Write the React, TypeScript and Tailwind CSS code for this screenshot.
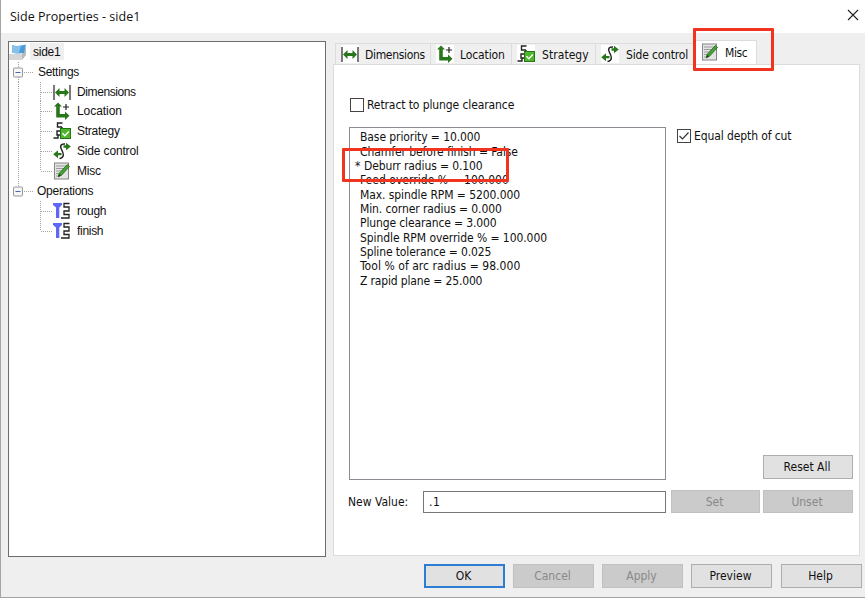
import type { ReactNode } from "react";

type IconName = "dimensions" | "location" | "strategy" | "side" | "misc" | "tool" | "block";

function Icon({ name }: { name: IconName }) {
  return (
    <svg width="18" height="18" viewBox="0 0 18 18" className="block shrink-0">
      {name === "dimensions" && (
        <>
          <path d="M1 2v15M17 2v15" stroke="#222" strokeWidth="1.200" fill="none" />
          <path d="M2 9.500 6.500 5v3h5V5L16 9.500 11.500 14v-3h-5v3z" fill="#28771b" />
        </>
      )}
      {name === "location" && (
        <>
          <path d="M5 0.500 9 4.500H6.800V12H12V9.500l4.500 4.200L12 18v-2.600H3.200V4.500H1z" fill="#28771b" />
          <path d="M13 2v6M10 5h6" stroke="#222" strokeWidth="1.200" />
        </>
      )}
      {name === "strategy" && (
        <>
          <path d="M9.500 1H4.500v4H9M9 5v4M9 9H4v4h4M5 13v3H0.500" stroke="#222" strokeWidth="1.400" fill="none" />
          <rect x="7.500" y="6.500" width="10" height="10" fill="#4eb52d" stroke="#237816" />
          <path d="m9.500 11.300 2.300 2.500 4-4.300" stroke="#fff" strokeWidth="1.400" fill="none" />
        </>
      )}
      {name === "side" && (
        <>
          <path d="M12 2C8 1.500 6.500 4 8.500 7.500S12 15.500 6.500 16.500" stroke="#222" strokeWidth="1.500" fill="none" />
          <path d="M10.500 3.200H13V.8l4.800 3.700L13 8.200V5.800h-2.500zM8.500 11H5V8.300L.2 12.300 5 16.300v-3h3.500z" fill="#28771b" />
        </>
      )}
      {name === "misc" && (
        <>
          <rect x="1.500" y="1" width="14" height="16" fill="#e4e4e4" stroke="#858585" />
          <path d="M3 4h11M3 6.500h8M3 9h6M3 11.500h4M3 14h3" stroke="#9b9b9b" />
          <path d="m6.300 11.200 8-8.600 2.200 1.800-8 8.900-3.300 1.500z" fill="#45a334" stroke="#216619" strokeWidth=".8" />
          <path d="m5 15 1.200-3.300 2 1.700z" fill="#174e13" />
        </>
      )}
      {name === "tool" && (
        <>
          <path d="M0 1h9v2L6.300 5.500V16H3V5.500L0 3z" fill="#6067f4" />
          <path d="M16.500 1.500H11V5h5v4h-5v3.500h5V16H8" stroke="#222" strokeWidth="1.300" fill="none" />
        </>
      )}
      {name === "block" && (
        <>
          <path d="M0 11h13l4-7v8l-4 5H0z" fill="#b7bbc1" />
          <path d="M0 11h13v6H0z" fill="#d5d6d8" />
          <path d="M3 2q5 2 14-.5L15 10q-6 1-12-.2z" fill="#4b9bd9" />
          <path d="M3 2q5 2 9 .5L10 10q-4 .5-7-.2z" fill="#86c1ec" />
        </>
      )}
    </svg>
  );
}

function BranchGuide({ first }: { first?: boolean }) {
  return (
    <svg width="28" height="20" viewBox="0 0 28 20" className="block shrink-0">
      <path d={first ? "M9.500 0v5M9.500 15v5M15 10.500h10" : "M9.500 0v5M15 10.500h10"} stroke="#a3a3a3" strokeDasharray="1 1" />
      <rect x="4.500" y="6" width="9" height="9" rx="1" fill="#f6f6f6" stroke="#989898" />
      <path d="M6.500 10.500h5" stroke="#4c63a6" />
    </svg>
  );
}

function LeafGuide({ trunk, last }: { trunk?: boolean; last?: boolean }) {
  return (
    <svg width="44" height="20" viewBox="0 0 44 20" className="block shrink-0">
      <path
        d={`${trunk ? "M9.500 0v20" : ""}M31.500 0v${last ? 10 : 20}M32 10.500h11`}
        stroke="#a3a3a3"
        strokeDasharray="1 1"
      />
    </svg>
  );
}

const settings: { icon: IconName; label: string; style: string }[] = [
  { icon: "dimensions", label: "Dimensions", style: "tracking-[-0.4px]" },
  { icon: "location", label: "Location", style: "tracking-[-0.05px]" },
  { icon: "strategy", label: "Strategy", style: "tracking-[-0.25px]" },
  { icon: "side", label: "Side control", style: "tracking-[-0.16px]" },
  { icon: "misc", label: "Misc", style: "tracking-[-0.2px]" },
];

const row = "flex h-[19.85px] items-center whitespace-nowrap";

function Tree() {
  return (
    <div className="h-[516px] w-[318px] shrink-0 overflow-hidden border border-[#6c6c6c] bg-white font-['Liberation_Sans',sans-serif] text-[12px] text-[#111]">
      <div className={row}>
        <Icon name="block" />
        <span className="ml-[3px] flex h-[17px] w-[34px] items-center bg-[#efefef] pl-[3px] tracking-[-0.25px]">side1</span>
      </div>
      <div className={row}>
        <BranchGuide first />
        <span className="ml-[1px] tracking-[-0.3px]">Settings</span>
      </div>
      {settings.map((s, i) => (
        <div key={s.label} className={row}>
          <LeafGuide trunk last={i === 4} />
          <Icon name={s.icon} />
          <span className={`ml-[6px] ${s.style}`}>{s.label}</span>
        </div>
      ))}
      <div className={row}>
        <BranchGuide />
        <span className="tracking-[-0.24px]">Operations</span>
      </div>
      {["rough", "finish"].map((label, i) => (
        <div key={label} className={row}>
          <LeafGuide last={i === 1} />
          <Icon name="tool" />
          <span className="ml-[6px] tracking-[-0.3px]">{label}</span>
        </div>
      ))}
    </div>
  );
}

function Tab({ icon, label, size, text }: { icon: IconName; label: string; size: string; text: string }) {
  return (
    <div className={`flex h-[21px] shrink-0 items-center whitespace-nowrap border-t border-r border-[#dcdcdc] pl-[5px] ${size}`}>
      <span className="bg-white"><Icon name={icon} /></span>
      <span className={`mt-[1px] ${text}`}>{label}</span>
    </div>
  );
}

function Check({ label, checked, className }: { label: string; checked?: boolean; className: string }) {
  return (
    <label className={`flex h-[15px] items-center gap-[3px] whitespace-nowrap tracking-[-0.1px] ${className}`}>
      <span className="flex size-[14px] items-center justify-center border border-[#444] bg-white">
        {checked && (
          <svg width="12" height="12" viewBox="0 0 12 12">
            <path d="m1.500 6 3 3 6-6.500" fill="none" stroke="#333" strokeWidth="1.200" />
          </svg>
        )}
      </span>
      <span>{label}</span>
    </label>
  );
}

function Button({ children, kind = "normal", size }: { children: ReactNode; kind?: "normal" | "off" | "primary"; size: string }) {
  const look =
    kind === "off"
      ? "border border-[#c0c0c0] bg-[#cbcbcb] text-[#898989]"
      : kind === "primary"
        ? "border-2 border-[#2d7dd2] bg-[#e1e1e1]"
        : "border border-[#adadad] bg-[#e1e1e1]";
  return <button className={`flex shrink-0 items-center justify-center whitespace-nowrap pr-[2px] ${look} ${size}`}>{children}</button>;
}

const params: [string, string][] = [
  ["Base priority = 10.000", "tracking-[-0.09px]"],
  ["Chamfer before finish = False", "tracking-[-0.07px]"],
  ["Deburr radius = 0.100", "tracking-[-0.11px]"],
  ["Feed override % = 100.000", "tracking-[0.03px]"],
  ["Max. spindle RPM = 5200.000", "tracking-[-0.08px]"],
  ["Min. corner radius = 0.000", "tracking-[-0.1px]"],
  ["Plunge clearance = 3.000", "tracking-[-0.13px]"],
  ["Spindle RPM override % = 100.000", "tracking-[-0.07px]"],
  ["Spline tolerance = 0.025", "tracking-[-0.13px]"],
  ["Tool % of arc radius = 98.000", "tracking-[0.05px]"],
  ["Z rapid plane = 25.000", "tracking-[-0.15px]"],
];

export default function App() {
  return (
    <div className="relative flex h-[598px] w-[865px] flex-col overflow-hidden border-b border-l border-[#a5a5a5] bg-[#efefef] font-['DejaVu_Sans_Condensed','DejaVu_Sans',sans-serif] text-[12px] leading-[14px] text-[#111] [font-stretch:condensed]">
      <header className="flex h-[33px] shrink-0 items-center justify-between bg-white pl-[9px] pr-[6px] font-['Open_Sans',sans-serif] text-[12.5px] [font-stretch:normal]">
        <span className="tracking-[0.02px]">Side Properties - side1</span>
        <svg width="12" height="12" viewBox="0 0 12 12" className="mb-1">
          <path d="m1 1 10 10M11 1 1 11" stroke="#222" strokeWidth="1.100" />
        </svg>
      </header>
      <main className="flex h-[524px] shrink-0 gap-[7px] pl-[7px] pt-[8px]">
        <Tree />
        <section className="flex w-[527px] flex-col">
          <nav className="flex h-[23px] shrink-0 items-end pl-[2px]">
            <Tab icon="dimensions" label="Dimensions" size="w-[96px] border-l" text="ml-[6px] tracking-[-0.33px]" />
            <Tab icon="location" label="Location" size="w-[81px]" text="ml-[6px] tracking-[-0.1px]" />
            <Tab icon="strategy" label="Strategy" size="w-[84px]" text="ml-[7px] tracking-[0.06px]" />
            <Tab icon="side" label="Side control" size="w-[98px]" text="ml-[7px] tracking-[-0.18px]" />
            <div className="mb-[-1px] flex h-[25px] w-[63px] items-center border-r border-t border-[#dcdcdc] bg-white pl-[7px] pb-[2px]">
              <Icon name="misc" />
              <span className="ml-[6px] mt-[1px] tracking-[-0.4px]">Misc</span>
            </div>
          </nav>
          <div className="flex h-[492px] shrink-0 flex-col border border-[#dcdcdc] bg-white pl-[15px]">
            <Check label="Retract to plunge clearance" className="mt-[32px] ml-[1px]" />
            <div className="mt-[15px] flex h-[353px]">
              <div className="w-[317px] shrink-0 border border-[#8b8b93] pt-[2px]">
                {params.map(([text, style], i) => (
                  <div key={text} className={`flex h-[14.35px] items-center whitespace-pre ${i === 2 ? "pl-[5px]" : "pl-[10px]"} ${style}`}>
                    {i === 2 && <span className="w-[9px]">*</span>}
                    <span>{text}</span>
                  </div>
                ))}
              </div>
              <div className="flex w-[187px] flex-col justify-between pl-[11px]">
                <Check checked label="Equal depth of cut" className="mt-[1px]" />
                <Button size="h-[24px] w-[90px] ml-[86px] mb-[1px]">Reset All</Button>
              </div>
            </div>
            <div className="mt-[10px] flex h-[24px] items-center">
              <span className="ml-[-1px] w-[75px] whitespace-nowrap">New Value:</span>
              <input defaultValue=".1" className="h-[22px] w-[243px] border border-[#777] bg-white px-[5px] tracking-[0.6px] outline-none" />
              <Button kind="off" size="ml-[5px] mb-[1px] h-[23px] w-[89px]">Set</Button>
              <Button kind="off" size="ml-[3px] mb-[1px] h-[23px] w-[90px]">Unset</Button>
            </div>
          </div>
        </section>
      </main>
      <footer className="mt-[7px] flex gap-[8px] pl-[423px]">
        <Button kind="primary" size="h-[24px] w-[81px]">OK</Button>
        <Button kind="off" size="h-[24px] w-[81px]">Cancel</Button>
        <Button kind="off" size="h-[24px] w-[81px]">Apply</Button>
        <Button size="h-[24px] w-[81px]">Preview</Button>
        <Button size="ml-[1px] h-[24px] w-[81px]">Help</Button>
      </footer>
      <div className="pointer-events-none absolute left-[692px] top-[28px] h-[43px] w-[81px] rounded-[1px] border-3 border-[#f03420]" />
      <div className="pointer-events-none absolute left-[341px] top-[148px] h-[34px] w-[167px] rounded-[1px] border-3 border-[#f03420]" />
    </div>
  );
}
